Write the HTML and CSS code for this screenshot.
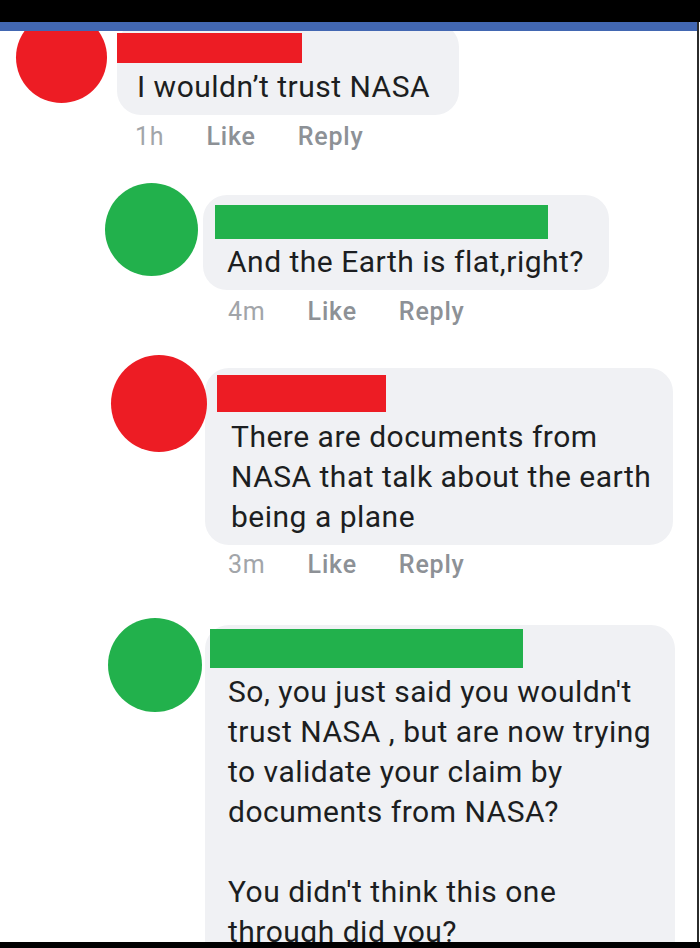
FILE: index.html
```html
<!DOCTYPE html>
<html lang="en">
<head>
    <meta charset="UTF-8">
    <meta name="viewport" content="width=device-width, initial-scale=1.0">
    <title>Comments</title>
    <link rel="stylesheet" href="styles.css">
</head>

<body>
    <div class="topbar"></div>
    <div class="frame">
        <div class="navbar"></div>

        <div class="feed">
            <!-- first comment -->
            <div class="comment c1">
                <div class="avatar red"></div>
                <div class="body">
                    <div class="bubble">
                        <div class="name red"></div>
                        <p class="text">I wouldn’t trust NASA</p>
                    </div>
                    <div class="meta">
                        <span class="time">1h</span>
                        <span class="action">Like</span>
                        <span class="action">Reply</span>
                    </div>
                </div>
            </div>

            <div class="comment c2">
                <div class="avatar green"></div>
                <div class="body">
                    <div class="bubble">
                        <div class="name green"></div>
                        <p class="text">And the Earth is flat,right?</p>
                    </div>
                    <div class="meta">
                        <span class="time">4m</span>
                        <span class="action">Like</span>
                        <span class="action">Reply</span>
                    </div>
                </div>
            </div>

            <div class="comment c3">
                <div class="avatar red"></div>
                <div class="body">
                    <div class="bubble">
                        <div class="name red"></div>
                        <p class="text">There are documents from NASA that talk about the earth being a plane</p>
                    </div>
                    <div class="meta">
                        <span class="time">3m</span>
                        <span class="action">Like</span>
                        <span class="action">Reply</span>
                    </div>
                </div>
            </div>

            <div class="comment c4">
                <div class="avatar green"></div>
                <div class="body">
                    <div class="bubble">
                        <div class="name green"></div>
                        <p class="text">So, you just said you wouldn't trust NASA , but are now trying to validate your claim by documents from NASA?<br><br>You didn't think this one through did you?</p>
                    </div>
                </div>
            </div>
        </div>
    </div>
    <div class="bottombar"></div>
</body>
</html>
```

FILE: styles.css
```css
body {
    margin: 0;
    background-color: #ffffff;
    font-family: "Roboto", "Liberation Sans", sans-serif;
    color: #1c1e21;
    width: 700px;
    height: 948px;
    overflow: hidden;
}

.topbar {
    height: 22px;
    background-color: #000000;
}

.frame {
    margin-right: 1px;
    border-right: 2px solid #2b2b2b;
}

.navbar {
    height: 9px;
    background-color: #4267b2;
}

.feed {
    height: 911px;
    overflow: hidden;
}

.bottombar {
    height: 6px;
    background-color: #000000;
}

/* one comment: avatar + bubble + meta */
.comment {
    display: flex;
    align-items: flex-start;
}

.avatar {
    flex: none;
    border-radius: 50%;
}

.red { background-color: #ed1c24; }
.green { background-color: #22b14c; }

.bubble {
    width: fit-content;
    box-sizing: border-box;
    background-color: #f0f1f4;
    border-radius: 24px;
    padding: 10px 25px 8px 24px;
}

.name {
    margin-left: -12px;
}

.text {
    margin: 4px 0 0;
    font-size: 30px;
    line-height: 40px;
    letter-spacing: 0.5px;
}

.meta {
    display: flex;
    gap: 42px;
    margin-top: 7px;
    font-size: 25px;
    line-height: 30px;
    letter-spacing: 0.8px;
    color: #8d9196;
}

.time {
    color: #a2a5a9;
}

.action {
    font-weight: 500;
}

/* comment 1 - partly under the nav bar */
.c1 {
    margin-top: -19px;
    margin-left: 16px;
}
.c1 .avatar { width: 91px; height: 91px; }
.c1 .body { margin-left: 10px; margin-top: 11px; }
.c1 .bubble { padding: 10px 29px 8px 20px; }
.c1 .name { width: 185px; height: 30px; margin-left: -20px; }
.c1 .meta { margin-left: 18px; }

/* comment 2 */
.c2 {
    margin-top: 31px;
    margin-left: 105px;
}
.c2 .avatar { width: 93px; height: 93px; }
.c2 .body { margin-left: 5px; margin-top: 12px; }
.c2 .name { width: 333px; height: 34px; }
.c2 .text { margin-top: 3px; }
.c2 .meta { margin-left: 25px; }

/* comment 3 */
.c3 {
    margin-top: 28px;
    margin-left: 111px;
}
.c3 .avatar { width: 96px; height: 97px; position: relative; }
.c3 .body { margin-left: -2px; margin-top: 13px; }
.c3 .bubble { width: 468px; padding: 7px 15px 8px 26px; }
.c3 .name { width: 169px; height: 37px; margin-left: -14px; }
.c3 .text { margin-top: 5px; }
.c3 .meta { margin-left: 23px; margin-top: 5px; }

/* comment 4 */
.c4 {
    margin-top: 38px;
    margin-left: 108px;
}
.c4 .avatar { width: 94px; height: 94px; }
.c4 .body { margin-left: 3px; margin-top: 7px; }
.c4 .bubble { width: 470px; padding: 4px 15px 40px 23px; }
.c4 .name { width: 313px; height: 39px; margin-left: -18px; }
```
